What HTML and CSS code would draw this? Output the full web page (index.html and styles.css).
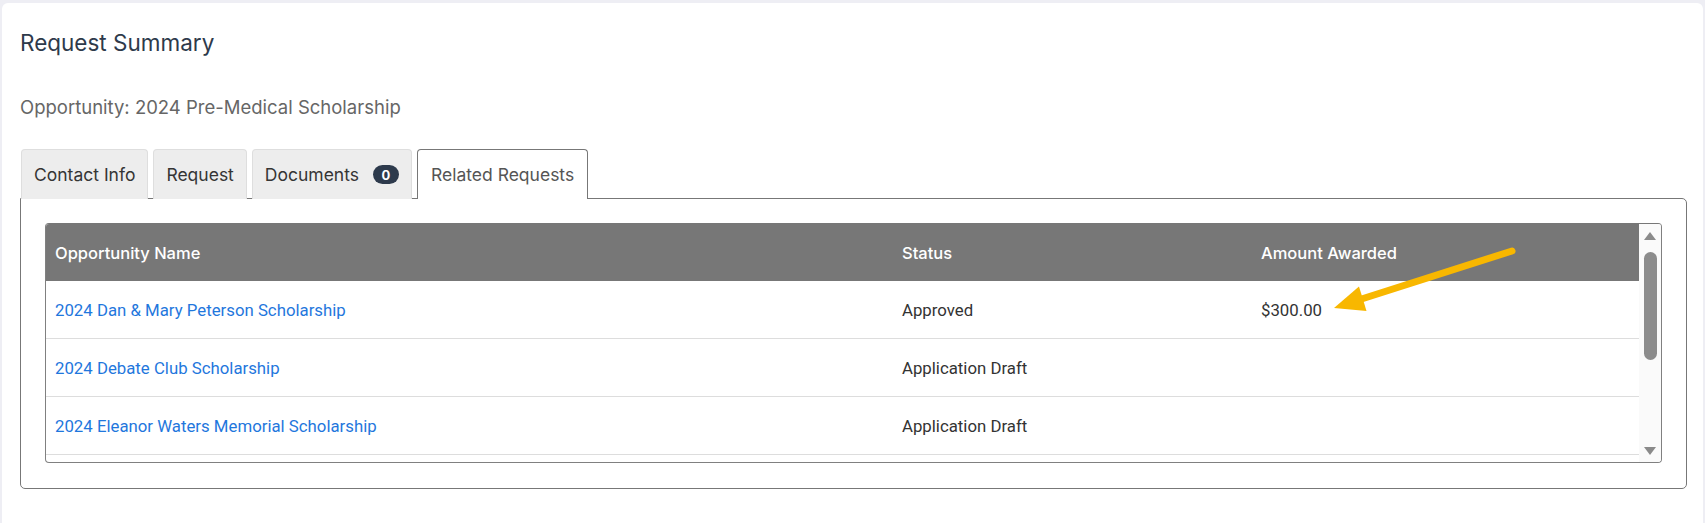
FILE: index.html
```html
<!DOCTYPE html>
<html lang="en">
  <head>
    <meta charset="UTF-8" />
    <meta name="viewport" content="width=device-width, initial-scale=1.0" />
    <title>Request Summary</title>
    <link rel="stylesheet" href="styles.css">
  </head>
  <body>
    <div class="page">
      <div class="card">
        <h2 class="title">Request Summary</h2>
        <p class="opportunity">Opportunity: 2024 Pre-Medical Scholarship</p>

        <div class="tabs">
          <div class="tab">Contact Info</div>
          <div class="tab">Request</div>
          <div class="tab">Documents <span class="badge">0</span></div>
          <div class="tab active">Related Requests</div>
        </div>

        <div class="panel">
          <div class="grid-wrap">
            <div class="grid">
              <div class="row head">
                <div class="cell">Opportunity Name</div>
                <div class="cell">Status</div>
                <div class="cell">Amount Awarded</div>
              </div>
              <div class="row">
                <div class="cell"><a href="#">2024 Dan &amp; Mary Peterson Scholarship</a></div>
                <div class="cell">Approved</div>
                <div class="cell">$300.00</div>
              </div>
              <div class="row">
                <div class="cell"><a href="#">2024 Debate Club Scholarship</a></div>
                <div class="cell">Application Draft</div>
                <div class="cell"></div>
              </div>
              <div class="row">
                <div class="cell"><a href="#">2024 Eleanor Waters Memorial Scholarship</a></div>
                <div class="cell">Application Draft</div>
                <div class="cell"></div>
              </div>
            </div>

            <!-- fake scrollbar -->
            <div class="scrollbar">
              <div class="arrow up"></div>
              <div class="track">
                <div class="thumb"></div>
              </div>
              <div class="arrow down"></div>
            </div>
          </div>
        </div>
      </div>

      <!-- annotation arrow -->
      <svg class="pointer" width="210" height="90" viewBox="0 0 210 90">
        <line x1="192" y1="11" x2="40" y2="59.5" stroke="#f8b700" stroke-width="7" stroke-linecap="round" />
        <polygon points="14,68 46.5,71 39,46.5" fill="#f8b700" />
      </svg>
    </div>
  </body>
</html>
```

FILE: styles.css
```css
* {
  margin: 0;
  padding: 0;
  box-sizing: border-box;
}

body {
  background-color: #eeeef4;
  font-family: Inter, "Open Sans", sans-serif;
  height: 523px;
  overflow: hidden;
}

.page {
  position: relative;
  padding: 3px 2px 0 2px;
}

.card {
  background: #ffffff;
  border-radius: 6px 6px 0 0;
  min-height: 520px;
  padding: 27px 16px 0 18px;
}

.title {
  font-size: 22.5px;
  font-weight: 400;
  line-height: 26px;
  color: #2e3a4b;
}

.opportunity {
  margin-top: 39px;
  font-size: 18.5px;
  line-height: 24px;
  color: #666666;
}

/* tabs */
.tabs {
  display: flex;
  gap: 5px;
  margin-top: 30px;
  padding-left: 1px;
  position: relative;
  z-index: 2;
}

.tab {
  height: 50px;
  padding: 0 12px;
  display: flex;
  align-items: center;
  font-size: 17.5px;
  color: #353535;
  background: #ededed;
  border: 1px solid #dedede;
  border-bottom: none;
  border-radius: 4px 4px 0 0;
  margin-bottom: -1px;
}

.tab.active {
  background: #ffffff;
  color: #555555;
  border-color: #777777;
  padding: 0 13px;
}

.badge {
  display: inline-flex;
  align-items: center;
  justify-content: center;
  width: 26px;
  height: 19px;
  margin-left: 14px;
  border-radius: 10px;
  background: #2d3a4c;
  color: #ffffff;
  font-size: 13px;
  font-weight: 700;
}

.panel {
  border: 1px solid #777777;
  border-radius: 0 5px 5px 5px;
  padding: 24px 24px 25px 24px;
}

/* table */
.grid-wrap {
  display: flex;
  height: 240px;
  border: 1px solid #808080;
  border-top-color: #777777;
  border-radius: 4px;
  overflow: hidden;
}

.grid {
  flex: 1;
  overflow: hidden;
}

.row {
  display: grid;
  grid-template-columns: 847px 359px 1fr;
  height: 58px;
  border-bottom: 1px solid #dddddd;
  align-items: center;
  font-family: Roboto, "Liberation Sans", sans-serif;
  font-size: 16.8px;
  color: #333333;
}

.row.head {
  height: 57px;
  background: #777777;
  border-bottom: none;
  color: #ffffff;
  font-family: Inter, "Open Sans", sans-serif;
  font-size: 16.5px;
  font-weight: 500;
}

.cell {
  padding: 0 9px;
}

.cell a {
  color: #1f77dd;
  text-decoration: none;
}

/* fake scrollbar */
.scrollbar {
  width: 22px;
  background: #fafafa;
  display: flex;
  flex-direction: column;
  align-items: center;
}

.arrow {
  width: 0;
  height: 0;
  border-left: 6px solid transparent;
  border-right: 6px solid transparent;
}

.arrow.up {
  margin-top: 8px;
  border-bottom: 8px solid #8a8a8a;
}

.arrow.down {
  margin-bottom: 7px;
  border-top: 8px solid #8a8a8a;
}

.track {
  flex: 1;
  width: 100%;
  padding: 12px 4px 0 5px;
}

.thumb {
  height: 108px;
  background: #8c8c8c;
  border-radius: 7px;
}

.pointer {
  position: absolute;
  left: 1320px;
  top: 240px;
}
```
